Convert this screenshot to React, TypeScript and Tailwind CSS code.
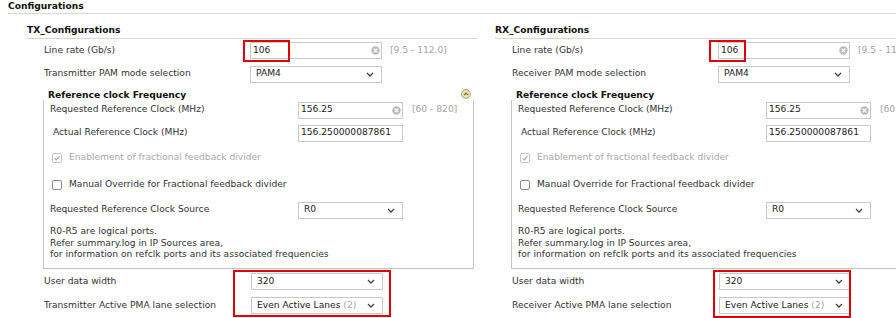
import type { ReactNode } from "react"

function ClearIcon() {
  return (
    <svg width="9" height="9" viewBox="0 0 9 9" className="shrink-0">
      <circle cx="4.5" cy="4.5" r="4.2" fill="#bababa" />
      <path d="M3 3l3 3M6 3l-3 3" stroke="#fff" strokeWidth="1.1" strokeLinecap="round" />
    </svg>
  )
}

function Chevron() {
  return (
    <svg width="8" height="5" viewBox="0 0 8 5" className="shrink-0">
      <path d="M1 1l3 3 3-3" fill="none" stroke="#444" strokeWidth="1.3" />
    </svg>
  )
}

function TextInput({ value, width, clear = true }: { value: string; width: string; clear?: boolean }) {
  return (
    <div className={`flex h-[17px] items-center justify-between border border-[#c9c9c9] bg-white pl-[2px] pr-[1px] ${width}`}>
      <span className="text-[#222]">{value}</span>
      {clear && <ClearIcon />}
    </div>
  )
}

function Select({ children, width }: { children: ReactNode; width: string }) {
  return (
    <div className={`flex h-[17px] items-center justify-between border border-[#c9c9c9] bg-white pl-[5px] pr-[7px] ${width}`}>
      <span className="text-[#222]">{children}</span>
      <Chevron />
    </div>
  )
}

function Checkbox({ checked, disabled }: { checked?: boolean; disabled?: boolean }) {
  return (
    <div
      className={`flex h-[10px] w-[10px] items-center justify-center rounded-[2px] border bg-white ${
        disabled ? "border-[#c4c4c4]" : "border-[#8a8a8a]"
      }`}
    >
      {checked && (
        <svg width="8" height="8" viewBox="0 0 8 8">
          <path d="M1.5 4.2l1.8 1.8 3.2-3.8" fill="none" stroke="#a8a8a8" strokeWidth="1.1" />
        </svg>
      )}
    </div>
  )
}

function Column({
  title,
  pamLabel,
  pmaLabel,
  lineBox,
  bottomBox,
}: {
  title: string
  pamLabel: string
  pmaLabel: string
  lineBox: string
  bottomBox: string
}) {
  return (
    <div className="w-[451px] shrink-0">
      {/* section header */}
      <div className="mt-[10px] flex h-[14px] items-center font-bold text-[#111]">{title}</div>
      <div className="h-px bg-[#d6d6d6]" />

      <div className="flex h-[23px] items-center pl-[17px]">
        <div className="w-[206px] shrink-0">Line rate (Gb/s)</div>
        <div className="relative">
          <TextInput value="106" width="w-[132px]" />
          <div className={`absolute border-2 border-[#e30000] ${lineBox}`} />
        </div>
        <span className="ml-[8px] text-[#a4a4a4]">[9.5 - 112.0]</span>
      </div>

      <div className="flex h-[24px] items-center pl-[17px]">
        <div className="w-[206px] shrink-0">{pamLabel}</div>
        <Select width="w-[132px]">PAM4</Select>
      </div>

      {/* reference clock group */}
      <div className="ml-[16px] w-[431px]">
        <div className="flex h-[14px] items-end justify-between pl-[5px] pr-[3px]">
          <span className="font-bold leading-none text-[#111]">Reference clock Frequency</span>
          <svg width="10" height="10" viewBox="0 0 10 10" className="mb-[1px]">
            <circle cx="5" cy="5" r="4.4" fill="#ece3a8" stroke="#9a9a80" strokeWidth="0.9" />
            <path d="M3 6l2-2 2 2" fill="none" stroke="#6d6d55" strokeWidth="1.1" />
          </svg>
        </div>

        <div className="border-x border-b border-[#c4c4c4] pb-[7px]">
          <div className="flex h-[20px] items-center pl-[6px]">
            <div className="w-[248px] shrink-0">Requested Reference Clock (MHz)</div>
            <TextInput value="156.25" width="w-[105px]" />
            <span className="ml-[9px] text-[#a4a4a4]">[60 - 820]</span>
          </div>

          <div className="flex h-[26px] items-center pl-[6px]">
            <div className="w-[248px] shrink-0 pl-[3px]">Actual Reference Clock (MHz)</div>
            <TextInput value="156.250000087861" width="w-[105px]" clear={false} />
          </div>

          <div className="flex h-[24px] items-center gap-[7px] pl-[8px]">
            <Checkbox checked disabled />
            <span className="text-[#a8a8a8]">Enablement of fractional feedback divider</span>
          </div>

          <div className="flex h-[30px] items-center gap-[7px] pl-[8px]">
            <Checkbox />
            <span>Manual Override for Fractional feedback divider</span>
          </div>

          <div className="flex h-[20px] items-center pl-[6px]">
            <div className="w-[248px] shrink-0">Requested Reference Clock Source</div>
            <Select width="w-[105px]">R0</Select>
          </div>

          <div className="pl-[6px] pt-[6px] leading-[11.5px]">
            <div>R0-R5 are logical ports.</div>
            <div>Refer summary.log in IP Sources area,</div>
            <div>for information on refclk ports and its associated frequencies</div>
          </div>
        </div>
      </div>

      <div className="relative">
        <div className="flex h-[26px] items-center pl-[17px]">
          <div className="w-[207px] shrink-0">User data width</div>
          <Select width="w-[132px]">320</Select>
        </div>
        <div className="flex h-[22px] items-center pl-[17px]">
          <div className="w-[207px] shrink-0">{pmaLabel}</div>
          <Select width="w-[132px]">
            Even Active Lanes <span className="text-[#a4a4a4]">(2)</span>
          </Select>
        </div>
        <div className={`absolute border-2 border-[#e30000] ${bottomBox}`} />
      </div>
    </div>
  )
}

export default function App() {
  return (
    <div className="h-[318px] w-[896px] overflow-hidden bg-white font-['DejaVu_Sans',sans-serif] text-[9.15px] text-[#333]">
      <div className="flex h-[13px] items-center pl-[8px] font-bold text-[#111]">Configurations</div>
      <div className="ml-[8px] h-px bg-[#d6d6d6]" />

      <div className="flex gap-[17px] pl-[27px]">
        <Column
          title="TX_Configurations"
          pamLabel="Transmitter PAM mode selection"
          pmaLabel="Transmitter Active PMA lane selection"
          lineBox="-left-[7px] -top-[2px] h-[22px] w-[47px]"
          bottomBox="left-[206px] top-[1px] h-[47px] w-[158px]"
        />
        <Column
          title="RX_Configurations"
          pamLabel="Receiver PAM mode selection"
          pmaLabel="Receiver Active PMA lane selection"
          lineBox="-left-[9px] -top-[2px] h-[22px] w-[37px]"
          bottomBox="left-[218px] top-[1px] h-[48px] w-[138px]"
        />
      </div>
    </div>
  )
}
